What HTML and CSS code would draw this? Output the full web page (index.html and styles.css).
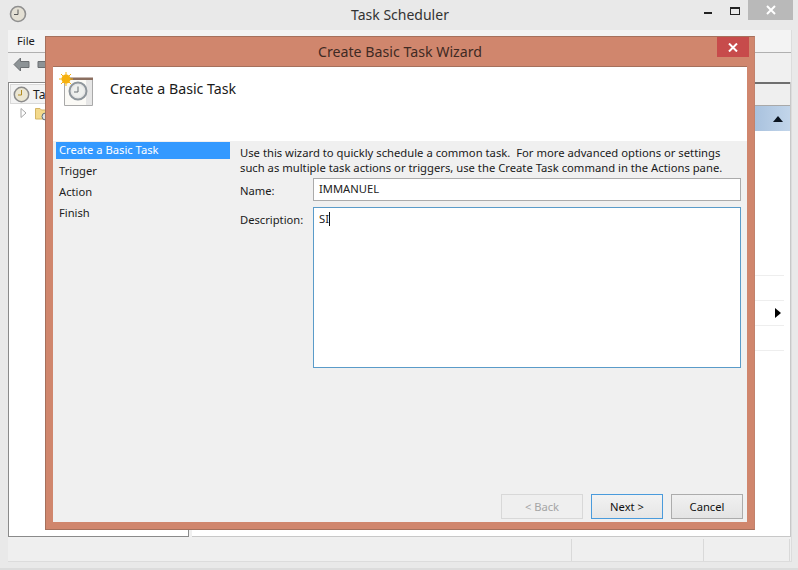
FILE: index.html
```html
<!DOCTYPE html>
<html lang="en">
<head>
<meta charset="utf-8">
<title>Task Scheduler</title>
<link rel="stylesheet" href="styles.css">
</head>
<body>
<div class="app">
  <header class="titlebar">
    <svg class="app-icon" width="18" height="18" viewBox="0 0 18 18"><circle cx="9" cy="9" r="7.5" fill="#e4e0d4" stroke="#8f8f8f" stroke-width="1.6"/><path d="M9 4.5V9.5H5" fill="none" stroke="#5a5a5a" stroke-width="1"/></svg>
    <div class="title">Task Scheduler</div>
    <div class="controls">
      <span class="min"></span>
      <span class="max"></span>
      <span class="close"><svg width="10" height="10" viewBox="0 0 10 10"><path d="M1 1L9 9M9 1L1 9" stroke="#fff" stroke-width="2"/></svg></span>
    </div>
  </header>
  <div class="frame">
    <nav class="menubar"><span>File</span></nav>
    <div class="toolbar">
      <svg width="17" height="15" viewBox="0 0 17 15"><path d="M7.5 1L1 7.500L7.500 14V10.500H16V4.500H7.500Z" fill="#8d9396" stroke="#6b6f72"/></svg>
      <svg width="17" height="15" viewBox="0 0 17 15"><path d="M9.500 1L16 7.500L9.500 14V10.500H1V4.500H9.500Z" fill="#8d9396" stroke="#6b6f72"/></svg>
    </div>
    <div class="panes">
      <aside class="tree">
        <div class="tree-root">
          <svg width="17" height="17" viewBox="0 0 17 17"><circle cx="8.500" cy="8.500" r="7.200" fill="#ebe6d2" stroke="#8b8b8b" stroke-width="1.500"/><path d="M8.500 4V9H5" fill="none" stroke="#b08a20" stroke-width="1"/></svg>
          <span>Ta</span>
        </div>
        <div class="tree-child">
          <svg width="7" height="10" viewBox="0 0 7 10"><path d="M1 .5L6 5L1 9.500Z" fill="#fff" stroke="#a6a6a6"/></svg>
          <svg width="15" height="15" viewBox="0 0 15 15"><path d="M.5 2.500H5L6.500 4H13.500V13H.5Z" fill="#f3d98b" stroke="#d4b565"/><circle cx="10.500" cy="10.500" r="3.500" fill="#dfe3e6" stroke="#5f6f7a"/></svg>
        </div>
      </aside>
      <div class="splitter"></div>
      <main class="center"></main>
      <aside class="actions">
        <div class="actions-head"></div>
        <div class="actions-blue"><svg width="10" height="6" viewBox="0 0 10 6"><path d="M5 0L10 6H0Z" fill="#0a1420"/></svg></div>
        <div class="actions-list">
          <div class="act"></div>
          <div class="act act-arrow"><svg width="6" height="10" viewBox="0 0 6 10"><path d="M0 0L6 5L0 10Z" fill="#000"/></svg></div>
          <div class="act"></div>
        </div>
      </aside>
    </div>
    <footer class="status">
      <div class="cell cell-a"></div>
      <div class="cell cell-b"></div>
      <div class="cell cell-c"></div>
    </footer>
  </div>

  <section class="dialog">
    <div class="dlg-title">
      <span>Create Basic Task Wizard</span>
      <span class="dlg-close"><svg width="10" height="9" viewBox="0 0 10 9"><path d="M1 .5L9 8.500M9 .5L1 8.500" stroke="#fff" stroke-width="2"/></svg></span>
    </div>
    <div class="dlg-body">
      <div class="dlg-head">
        <svg class="wiz-icon" width="36" height="34" viewBox="0 0 36 34">
          <path d="M5.500 6.500H33.500V33.500H5.500Z" fill="#fbfaf6" stroke="#a9a9a9"/>
          <rect x="5" y="5.500" width="29" height="2.500" fill="#8b6f60"/>
          <rect x="27" y="8" width="6" height="25" fill="#e6e6e6"/>
          <circle cx="19" cy="19" r="8.500" fill="#e6e6e6" stroke="#8e969c" stroke-width="2"/>
          <circle cx="19" cy="19" r="6" fill="#eef0ee"/>
          <path d="M19 14.500V20H15" fill="none" stroke="#6a7075" stroke-width="1"/>
          <circle cx="7" cy="7" r="4.500" fill="#f6b10f"/>
          <path d="M7 0V14M0 7H14M2 2L12 12M12 2L2 12" stroke="#f6b10f" stroke-width="1"/>
        </svg>
        <h1>Create a Basic Task</h1>
      </div>
      <div class="dlg-main">
        <ul class="steps">
          <li class="on">Create a Basic Task</li>
          <li>Trigger</li>
          <li>Action</li>
          <li>Finish</li>
        </ul>
        <div class="form">
          <p class="intro">Use this wizard to quickly schedule a common task.&nbsp; For more advanced options or settings such as multiple task actions or triggers, use the Create Task command in the Actions pane.</p>
          <div class="row row-name">
            <label>Name:</label>
            <div class="field">IMMANUEL</div>
          </div>
          <div class="row row-desc">
            <label>Description:</label>
            <div class="field area">SI<i class="caret"></i></div>
          </div>
        </div>
      </div>
      <div class="buttons">
        <button class="btn off" type="button">&lt; Back</button>
        <button class="btn def" type="button">Next &gt;</button>
        <button class="btn" type="button">Cancel</button>
      </div>
    </div>
  </section>
</div>
</body>
</html>
```
FILE: styles.css
```css
* { box-sizing: border-box; }
html, body { margin: 0; padding: 0; }
body { font-family: "Noto Sans", "Open Sans", sans-serif; font-size: 11.2px; color: #1a1a1a; background: #e9e9e9; overflow: hidden; }
.app { position: relative; width: 798px; height: 570px; display: flex; flex-direction: column; background: #e9e9e9; border-bottom: 2px solid #dcdcdc; }

.titlebar { height: 30px; flex: none; display: flex; align-items: center; position: relative; padding: 0 0 1px 9px; }
.app-icon { margin-top: -2px; }
.title { position: absolute; left: 0; right: -2px; top: 5px; text-align: center; font-size: 14px; line-height: 20px; color: #333; }
.controls { position: absolute; right: 5px; top: 0; display: flex; align-items: flex-start; }
.min { width: 8px; height: 2px; background: #222; margin: 12px 18px 0 0; }
.max { width: 10px; height: 8px; border: 1px solid #222; border-top-width: 2px; margin: 7px 8px 0 0; }
.close { width: 45px; height: 20px; background: #b9b9b9; display: flex; align-items: center; justify-content: center; }

.frame { width: 784px; height: 532px; margin-left: 8px; display: flex; flex-direction: column; background: #f0f0f0; border-right: 1px solid #dcdcdc; }
.menubar { height: 23px; flex: none; padding: 3px 9px; background: #f3f3f3; border-bottom: 1px solid #b0b0b0; }
.toolbar { height: 29px; flex: none; padding: 4px 5px; display: flex; gap: 7px; align-items: flex-start; background: #f0f0f0; }
.panes { flex: 1; display: flex; min-height: 0; }
.tree { width: 181px; background: #fff; border: 1px solid #8a8a8a; padding: 1px 0 0 1px; }
.tree-root { height: 20px; display: flex; align-items: center; gap: 3px; padding-left: 2px; background: #f3f3f3; border: 1px solid #d9d9d9; font-size: 12px; white-space: nowrap; overflow: hidden; }
.tree-child { display: flex; align-items: center; gap: 8px; padding: 1px 0 0 10px; height: 17px; }
.splitter { width: 3px; background: #f0f0f0; }
.center { flex: 1; background: #fff; border-top: 1px solid #8a8a8a; border-bottom: 1px solid #c8c8c8; }
.actions { width: 36px; background: #fff; border-right: 1px solid #c8c8c8; border-bottom: 1px solid #c8c8c8; }
.actions-head { height: 24px; background: #efefef; border-top: 2px solid #6f6f6f; border-bottom: 1px solid #a9a9a9; }
.actions-blue { height: 25px; background: linear-gradient(90deg, #a9c2de, #c2d5ea); display: flex; align-items: center; justify-content: flex-end; padding-right: 7px; }
.actions-list { padding-top: 144px; }
.act { height: 25px; border-top: 1px solid #eeeeee; width: 29px; position: relative; display: flex; align-items: center; justify-content: flex-end; padding-right: 3px; }
.act:last-child { border-bottom: 1px solid #eeeeee; height: 26px; }
.status { height: 23px; flex: none; display: flex; margin-top: 2px; border-bottom: 1px solid #dcdcdc; background: #efefef; }
.cell { border-right: 1px solid #d9d9d9; }
.cell-a { width: 564px; }
.cell-b { width: 132px; }
.cell-c { width: 86px; }

.dialog { position: absolute; left: 45px; top: 36px; width: 710px; height: 494px; padding: 0 7px 7px; background: #d0866d; border: 1px solid #a5705c; border-right-color: #c2826c; display: flex; flex-direction: column; }
.dlg-title { height: 29px; flex: none; position: relative; text-align: center; font-size: 14.200px; line-height: 29px; color: #3f2a23; }
.dlg-close { position: absolute; right: -2px; top: 0; width: 32px; height: 20px; background: #c74b4b; display: flex; align-items: center; justify-content: center; }
.dlg-body { flex: 1; min-height: 0; display: flex; flex-direction: column; background: #f0f0f0; border-top: 1px solid #a5705c; }
.dlg-head { height: 74px; flex: none; background: #fff; display: flex; align-items: flex-start; padding: 5px 0 0 6px; }
.wiz-icon { flex: none; }
h1 { margin: 7px 0 0 15px; font-size: 14.200px; font-weight: 400; line-height: 20px; color: #1a1a1a; }
.dlg-main { flex: 1; min-height: 0; display: flex; padding-top: 1px; }
.steps { width: 187px; flex: none; list-style: none; margin: 0; padding: 0 0 0 3px; }
.steps li { width: 174px; height: 21px; padding-left: 3px; line-height: 16px; color: #222; }
.steps li.on { height: 17px; margin-bottom: 4px; background: #3399ff; color: #fff; }
.form { width: 501px; flex: none; }
.intro { margin: 3px 0 0; width: 500px; line-height: 15px; font-size: 11.250px; color: #1a1a1a; }
.row { display: flex; align-items: flex-start; }
.row label { width: 73px; flex: none; }
.row-name { margin-top: 3px; }
.row-name label { padding-top: 5px; }
.row-desc { margin-top: 6px; }
.row-desc label { padding-top: 5px; }
.field { width: 428px; height: 23px; background: #fff; border: 1px solid #ababab; padding: 2px 5px; line-height: 16px; color: #222; }
.area { height: 161px; border-color: #5a9bc9; padding-top: 3px; }
.caret { display: inline-block; width: 1px; height: 14px; background: #111; vertical-align: -3px; }
.buttons { flex: none; height: 28px; display: flex; gap: 8px; justify-content: flex-end; padding: 0 4px 0 0; }
.btn { width: 72px; height: 25px; font: inherit; color: #111; padding: 0; background: linear-gradient(#f0f0f0, #e4e4e4); border: 1px solid #acacac; }
.btn.off { width: 82px; color: #a5a5a5; background: #efefef; border-color: #d8d8d8; }
.btn.def { border-color: #4a9bdc; background: linear-gradient(#f2f2f2, #e6e6e6); }
```
